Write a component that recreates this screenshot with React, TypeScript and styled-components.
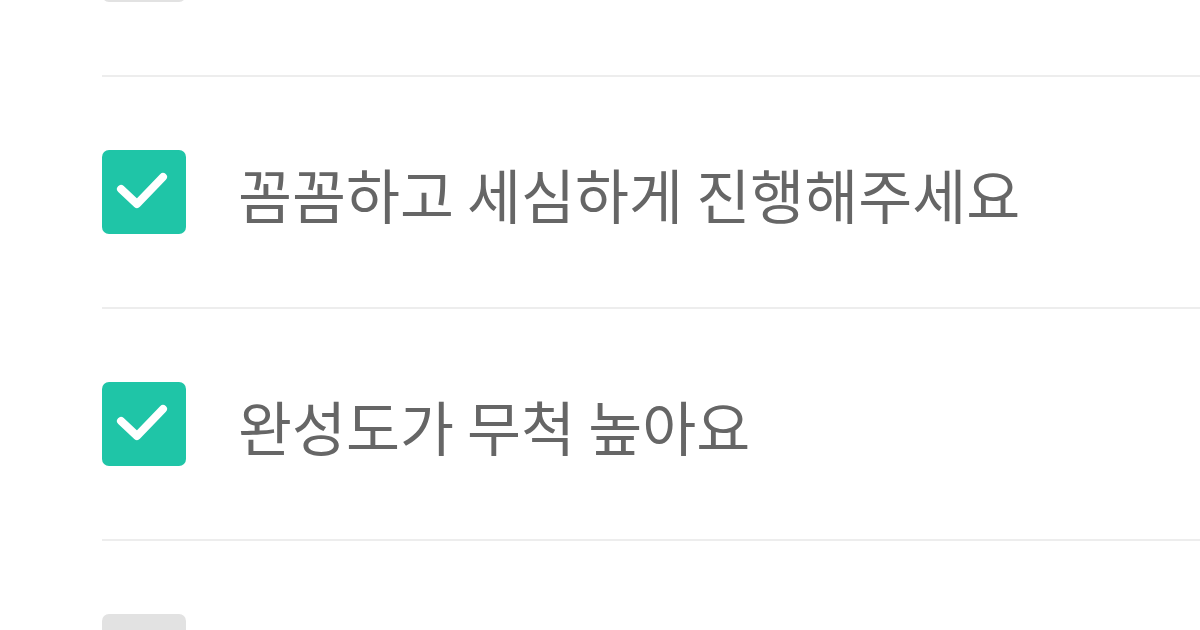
import styled, {createGlobalStyle} from "styled-components";

const GlobalStyle = createGlobalStyle`
  html, body {
    margin: 0;
    padding: 0;
    background: #ffffff;
    overflow: hidden;
  }
  body {
    font-family: "Noto Sans CJK KR", "Noto Sans", sans-serif;
  }
`;

const Page = styled.div`
  width: 1200px;
  height: 630px;
  overflow: hidden;
  background: #ffffff;
`;

const List = styled.ul`
  list-style: none;
  margin: -155px 0 0 0;
  padding: 0 0 0 102px;
`;

const Row = styled.li`
  display: flex;
  align-items: center;
  gap: 52px;
  padding: 73px 0;
  border-bottom: 2px solid #ededed;
`;

const Box = styled.span<{ $checked: boolean }>`
  flex: none;
  display: flex;
  align-items: center;
  justify-content: center;
  width: 84px;
  height: 84px;
  border-radius: 7px;
  background: ${(props) => (props.$checked ? "#1fc5a7" : "#e2e2e2")};
`;

const Label = styled.span<{ $checked: boolean }>`
  font-size: 58.7px;
  line-height: 84px;
  color: ${(props) => (props.$checked ? "#666666" : "#b5b5b5")};
  white-space: nowrap;
  transform: translateY(2px);
`;

interface Item {
  id: number;
  text: string;
  checked: boolean;
}

const items: Item[] = [
  {id: 1, text: "친절하고 빨라요", checked: false},
  {id: 2, text: "꼼꼼하고 세심하게 진행해주세요", checked: true},
  {id: 3, text: "완성도가 무척 높아요", checked: true},
  {id: 4, text: "응답이 빨라요", checked: false},
];

const Check = () => (
  <svg width="84" height="84" viewBox="0 0 84 84">
    <path
      d="M19 39 L35 54 L61 27"
      fill="none"
      stroke="#ffffff"
      strokeWidth="8"
      strokeLinecap="round"
      strokeLinejoin="round"
    />
  </svg>
);

const App = () => {
  return (
    <Page>
      <GlobalStyle />
      <List>
        {items.map((item) => (
          <Row key={item.id}>
            <Box $checked={item.checked}>{item.checked && <Check />}</Box>
            <Label $checked={item.checked}>{item.text}</Label>
          </Row>
        ))}
      </List>
    </Page>
  );
};

export default App;
